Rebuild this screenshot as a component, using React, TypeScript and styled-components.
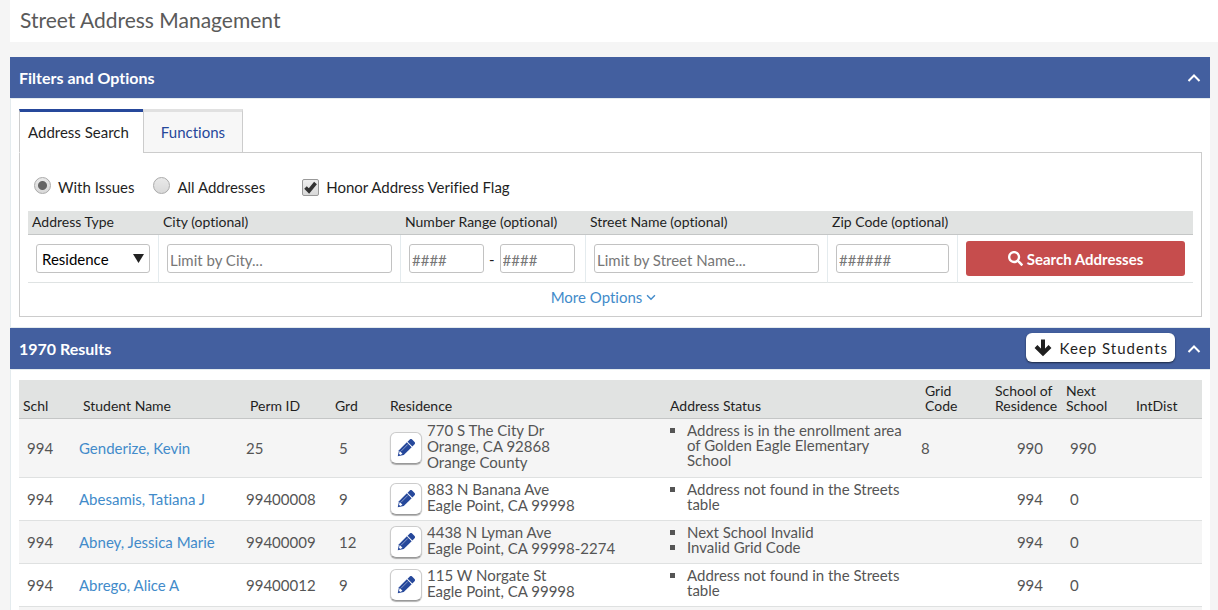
import React from 'react';
import styled, { createGlobalStyle } from 'styled-components';
import { FaSearch } from 'react-icons/fa';

const GlobalStyle = createGlobalStyle`
  *, *::before, *::after { box-sizing: border-box; }
  html, body, #root { margin: 0; min-height: 100%; }
  body {
    background: #f5f5f5;
    color: #1f1f1f;
    font-family: Lato, 'Liberation Sans', sans-serif;
    font-size: 15px;
    font-variant-ligatures: none;
    line-height: 16px;
  }
  button, input, select { font: inherit; font-variant-ligatures: none; color: inherit; margin: 0; }
  h1, h2, ul { margin: 0; padding: 0; font-weight: 400; }
  a { color: #428bca; text-decoration: none; }
`;

const Page = styled.div`
  display: flex;
  flex-direction: column;
  min-height: 100vh;
  padding-left: 10px;
`;

const TitleBar = styled.header`
  display: flex;
  align-items: center;
  height: 42px;
  margin-bottom: 15px;
  padding: 0 10px 2px;
  background: #fff;
`;

const Title = styled.h1`
  color: #5a5a5a;
  font-size: 21px;
  line-height: 24px;
`;

const Panel = styled.section<{ $grow?: boolean }>`
  display: flex;
  flex-direction: column;
  flex: ${(p) => (p.$grow ? '1 0 auto' : '0 0 auto')};
  margin-right: 8px;
`;

const PanelHeader = styled.div`
  display: flex;
  align-items: center;
  gap: 12px;
  height: 41px;
  padding: 0 9px;
  background: #435f9f;
  color: #fff;
`;

const PanelTitle = styled.h2`
  flex: 1;
  padding-top: 1px;
  font-size: 16px;
  font-weight: 700;
  line-height: 20px;
`;

const PanelBody = styled.div<{ $flush?: boolean }>`
  display: flex;
  flex-direction: column;
  flex: 1;
  padding: 10px 8px ${(p) => (p.$flush ? 0 : 10)}px;
  background: #fff;
  border: 1px solid #e4ebee;
  border-right: 0;
  border-bottom-width: ${(p) => (p.$flush ? 0 : 1)}px;
`;

const CollapseButton = styled.button`
  display: flex;
  padding: 0;
  border: 0;
  background: none;
`;

const KeepButton = styled.button`
  display: flex;
  align-items: center;
  gap: 8px;
  height: 29px;
  margin-bottom: 2px;
  padding: 0 7px 0 8px;
  border: 0;
  border-radius: 6px;
  background: #fff;
  box-shadow: 0 1px 2px rgba(0, 0, 0, 0.6);
  color: #1f1f1f;
  letter-spacing: 1px;
`;

const TabList = styled.div`
  display: flex;
`;

const Tab = styled.button<{ $active?: boolean }>`
  position: relative;
  z-index: ${(p) => (p.$active ? 1 : 0)};
  height: 44px;
  margin-bottom: -1px;
  padding: ${(p) => (p.$active ? '0 14px 0 8px' : '0 17px')};
  border: 1px solid #ccc;
  border-top: 3px solid ${(p) => (p.$active ? '#26489b' : '#e1e1e1')};
  border-right-width: ${(p) => (p.$active ? 0 : 1)}px;
  border-bottom-color: ${(p) => (p.$active ? '#fff' : '#ccc')};
  background: ${(p) => (p.$active ? '#fff' : '#f7f7f7')};
  color: ${(p) => (p.$active ? '#1f1f1f' : '#26489b')};
`;

const TabPanel = styled.div`
  padding: 24px 8px 11px;
  border: 1px solid #ccc;
`;

const OptionRow = styled.div`
  display: flex;
  align-items: center;
  height: 20px;
  margin-bottom: 14px;
  padding-left: 6px;
`;

const Option = styled.label<{ $gap: number }>`
  display: flex;
  align-items: center;
  gap: 7px;
  margin-right: ${(p) => p.$gap}px;
`;

const Radio = styled.input`
  appearance: none;
  width: 17px;
  height: 17px;
  margin-bottom: 3px;
  border: 1px solid #aaa;
  border-radius: 50%;
  background: linear-gradient(#e9e9e9, #d9d9d9);
  &:checked {
    background: radial-gradient(circle, #666 4px, transparent 5px), linear-gradient(#e9e9e9, #d9d9d9);
  }
`;

const CheckWrap = styled.span`
  display: grid;
  > * { grid-area: 1 / 1; }
  svg { pointer-events: none; }
`;

const Checkbox = styled.input`
  appearance: none;
  width: 17px;
  height: 17px;
  border: 1px solid #999;
  border-radius: 2px;
  background: linear-gradient(#eee, #d9d9d9);
`;

const Filters = styled.div`
  display: grid;
  grid-template-columns: 131px 242px 185px 242px 130px 1fr;
`;

const Field = styled.div`
  display: flex;
  flex-direction: column;
`;

const FieldLabel = styled.label`
  height: 24px;
  padding: 3px 4px 0;
  border-bottom: 1px solid #c4c6c6;
  background: #e1e3e2;
  font-size: 14px;
`;

const FieldBody = styled.div`
  display: flex;
  align-items: center;
  gap: 5px;
  height: 48px;
  padding: 0 8px;
  border-right: 1px solid #e4ebee;
  border-bottom: 1px solid #dfe3e3;
  ${Field}:last-child & { border-right: 0; }
`;

const TextBox = styled.input<{ $w: number }>`
  width: ${(p) => p.$w}px;
  height: 29px;
  padding: 2px 2px 0;
  border: 1px solid #c2c2c2;
  border-radius: 3px;
  background: #fff;
  &::placeholder { color: #777; opacity: 1; }
`;

const SelectWrap = styled.div`
  display: grid;
  align-items: center;
  > * { grid-area: 1 / 1; }
  svg { justify-self: end; margin-right: 6px; pointer-events: none; }
`;

const Select = styled.select`
  appearance: none;
  width: 114px;
  height: 29px;
  padding: 0 5px;
  border: 1px solid #c2c2c2;
  border-radius: 3px;
  background: #fff;
  color: #000;
`;

const SearchButton = styled.button`
  display: flex;
  flex: 1;
  align-items: center;
  justify-content: center;
  gap: 4px;
  height: 35px;
  border: 0;
  border-radius: 3px;
  background: #c64d4d;
  color: #fff;
  font-weight: 700;
`;

const MoreRow = styled.div`
  display: flex;
  justify-content: center;
  padding: 6px 14px 0 0;
`;

const MoreLink = styled.a`
  display: flex;
  align-items: center;
  gap: 4px;
`;

const TableArea = styled.div`
  flex: 1;
  background: #f5f5f5;
`;

const Table = styled.table`
  width: 100%;
  border-collapse: separate;
  border-spacing: 0;
  table-layout: fixed;
  color: #555;
`;

const Th = styled.th<{ $inset?: boolean }>`
  height: 39px;
  padding: 0 0 5px ${(p) => (p.$inset ? 8 : 4)}px;
  border-bottom: 1px solid #c4c6c6;
  background: #e1e3e2;
  color: #1f1f1f;
  font-size: 14px;
  font-weight: 400;
  line-height: 15px;
  text-align: left;
  vertical-align: bottom;
  white-space: nowrap;
`;

const Row = styled.tr`
  height: 43px;
  background: #fff;
  &:nth-child(odd) { background: #f5f5f5; }
`;

const Td = styled.td<{ $inset?: boolean; $right?: boolean }>`
  padding: 0 ${(p) => (p.$right ? 19 : 0)}px 0 ${(p) => (p.$inset ? 8 : 4)}px;
  border-bottom: 1px solid #dfe1e1;
  text-align: ${(p) => (p.$right ? 'right' : 'left')};
  vertical-align: middle;
`;

const StatusTd = styled(Td)`
  padding-top: 4px;
  padding-right: 4px;
  vertical-align: top;
`;

const Residence = styled.div`
  display: flex;
  align-items: center;
  gap: 5px;
`;

const Lines = styled.div`
  padding: 3px 0 7px;
`;

const EditButton = styled.button`
  display: flex;
  align-items: center;
  justify-content: center;
  width: 32px;
  height: 32px;
  padding: 0;
  border: 1px solid #ccc;
  border-bottom-color: #999;
  border-radius: 6px;
  background: #fff;
  box-shadow: 0 1px 1px rgba(0, 0, 0, 0.3);
  color: #26489b;
`;

const StatusList = styled.ul`
  list-style: none;
  line-height: 15px;
`;

const StatusItem = styled.li`
  display: flex;
  gap: 12px;
  &::before {
    content: '';
    flex: none;
    width: 5px;
    height: 5px;
    margin-top: 5px;
    background: #555;
  }
`;

const Chevron = ({ up, size, weight }: { up?: boolean; size: number; weight: number }) => (
  <svg width={size} height={size} viewBox="0 0 14 14" fill="none" stroke="currentColor" strokeWidth={weight} aria-hidden="true">
    <path d={up ? 'M1.5 10 L7 4.5 L12.5 10' : 'M1.5 4.5 L7 10 L12.5 4.5'} />
  </svg>
);

const Pencil = () => (
  <svg width="18" height="18" viewBox="0 0 18 18" aria-hidden="true">
    <g transform="translate(0.8 17.2) rotate(-45)">
      <path fill="currentColor" d="M0 0 L5 -3.4 H16.2 V3.4 H5 Z" />
      <path fill="currentColor" d="M17.2 -3.4 H20 Q22 -3.4 22 -1.4 V1.4 Q22 3.4 20 3.4 H17.2 Z" />
      <path fill="#fff" d="M2.6 -0.9 L5 -2.2 V1.6 L2.6 0.9 Z" />
      <path stroke="#fff" strokeOpacity="0.6" strokeWidth="0.7" d="M6 -1.2 H15.4" />
    </g>
  </svg>
);

const ArrowDown = () => (
  <svg width="18" height="18" viewBox="0 0 18 18" fill="none" stroke="currentColor" strokeWidth="4" aria-hidden="true">
    <path d="M9 0.5 V14" />
    <path d="M2 7.5 L9 14.5 L16 7.5" />
  </svg>
);

const columns: { label: React.ReactNode; key: string; width?: number; inset?: boolean }[] = [
  { key: 'schl', label: 'Schl', width: 56 },
  { key: 'name', label: 'Student Name', width: 167, inset: true },
  { key: 'perm', label: 'Perm ID', width: 89, inset: true },
  { key: 'grd', label: 'Grd', width: 55 },
  { key: 'res', label: 'Residence', width: 280 },
  { key: 'status', label: 'Address Status' },
  { key: 'grid', label: <>Grid<br />Code</>, width: 74, inset: true },
  { key: 'sor', label: <>School of<br />Residence</>, width: 71 },
  { key: 'next', label: <>Next<br />School</>, width: 70 },
  { key: 'int', label: 'IntDist', width: 70 },
];

const students = [
  { name: 'Genderize, Kevin', id: '25', grade: '5', address: ['770 S The City Dr', 'Orange, CA 92868', 'Orange County'], status: ['Address is in the enrollment area of Golden Eagle Elementary School'], grid: '8', school: '990', next: '990' },
  { name: 'Abesamis, Tatiana J', id: '99400008', grade: '9', address: ['883 N Banana Ave', 'Eagle Point, CA 99998'], status: ['Address not found in the Streets table'], grid: '', school: '994', next: '0' },
  { name: 'Abney, Jessica Marie', id: '99400009', grade: '12', address: ['4438 N Lyman Ave', 'Eagle Point, CA 99998-2274'], status: ['Next School Invalid', 'Invalid Grid Code'], grid: '', school: '994', next: '0' },
  { name: 'Abrego, Alice A', id: '99400012', grade: '9', address: ['115 W Norgate St', 'Eagle Point, CA 99998'], status: ['Address not found in the Streets table'], grid: '', school: '994', next: '0' },
];

export default function App() {
  return (
    <>
      <GlobalStyle />
      <Page>
        <TitleBar>
          <Title>Street Address Management</Title>
        </TitleBar>

        <Panel>
          <PanelHeader>
            <PanelTitle>Filters and Options</PanelTitle>
            <CollapseButton aria-label="Collapse filters"><Chevron up size={14} weight={2} /></CollapseButton>
          </PanelHeader>
          <PanelBody>
            <TabList role="tablist">
              <Tab role="tab" aria-selected="true" $active>Address Search</Tab>
              <Tab role="tab" aria-selected="false">Functions</Tab>
            </TabList>
            <TabPanel role="tabpanel">
              <OptionRow>
                <Option $gap={19}><Radio type="radio" name="scope" defaultChecked />With Issues</Option>
                <Option $gap={37}><Radio type="radio" name="scope" />All Addresses</Option>
                <Option $gap={0}>
                  <CheckWrap>
                    <Checkbox type="checkbox" defaultChecked />
                    <svg width="17" height="17" viewBox="0 0 17 17" fill="none" stroke="#333" strokeWidth="3.6" aria-hidden="true">
                      <path d="M3.5 8.5 L7 12 L13.5 4" />
                    </svg>
                  </CheckWrap>
                  Honor Address Verified Flag
                </Option>
              </OptionRow>
              <Filters>
                <Field>
                  <FieldLabel htmlFor="type">Address Type</FieldLabel>
                  <FieldBody>
                    <SelectWrap>
                      <Select id="type"><option>Residence</option></Select>
                      <svg width="11" height="9" viewBox="0 0 11 9" fill="#222" aria-hidden="true"><path d="M0 0 H11 L5.5 9 Z" /></svg>
                    </SelectWrap>
                  </FieldBody>
                </Field>
                <Field>
                  <FieldLabel htmlFor="city">City (optional)</FieldLabel>
                  <FieldBody><TextBox id="city" $w={225} placeholder="Limit by City..." /></FieldBody>
                </Field>
                <Field>
                  <FieldLabel htmlFor="from">Number Range (optional)</FieldLabel>
                  <FieldBody>
                    <TextBox id="from" $w={75} placeholder="####" />
                    -
                    <TextBox aria-label="Number range end" $w={75} placeholder="####" />
                  </FieldBody>
                </Field>
                <Field>
                  <FieldLabel htmlFor="street">Street Name (optional)</FieldLabel>
                  <FieldBody><TextBox id="street" $w={225} placeholder="Limit by Street Name..." /></FieldBody>
                </Field>
                <Field>
                  <FieldLabel htmlFor="zip">Zip Code (optional)</FieldLabel>
                  <FieldBody><TextBox id="zip" $w={113} placeholder="######" /></FieldBody>
                </Field>
                <Field>
                  <FieldLabel as="div" />
                  <FieldBody><SearchButton><FaSearch size={15} />Search Addresses</SearchButton></FieldBody>
                </Field>
              </Filters>
              <MoreRow>
                <MoreLink href="#more">More Options<Chevron size={10} weight={2} /></MoreLink>
              </MoreRow>
            </TabPanel>
          </PanelBody>
        </Panel>

        <Panel $grow>
          <PanelHeader>
            <PanelTitle>1970 Results</PanelTitle>
            <KeepButton><ArrowDown />Keep Students</KeepButton>
            <CollapseButton aria-label="Collapse results"><Chevron up size={14} weight={2} /></CollapseButton>
          </PanelHeader>
          <PanelBody $flush>
            <TableArea>
              <Table>
                <colgroup>
                  {columns.map((c) => <col key={c.key} width={c.width} />)}
                </colgroup>
                <thead>
                  <tr>{columns.map((c) => <Th key={c.key} scope="col" $inset={c.inset}>{c.label}</Th>)}</tr>
                </thead>
                <tbody>
                  {students.map((s) => (
                    <Row key={s.id}>
                      <Td $inset>994</Td>
                      <Td><a href="#student">{s.name}</a></Td>
                      <Td>{s.id}</Td>
                      <Td $inset>{s.grade}</Td>
                      <Td>
                        <Residence>
                          <EditButton aria-label={`Edit address of ${s.name}`}><Pencil /></EditButton>
                          <Lines>{s.address.map((l) => <div key={l}>{l}</div>)}</Lines>
                        </Residence>
                      </Td>
                      <StatusTd>
                        <StatusList>{s.status.map((t) => <StatusItem key={t}>{t}</StatusItem>)}</StatusList>
                      </StatusTd>
                      <Td>{s.grid}</Td>
                      <Td $right>{s.school}</Td>
                      <Td $inset>{s.next}</Td>
                      <Td />
                    </Row>
                  ))}
                </tbody>
              </Table>
            </TableArea>
          </PanelBody>
        </Panel>
      </Page>
    </>
  );
}
